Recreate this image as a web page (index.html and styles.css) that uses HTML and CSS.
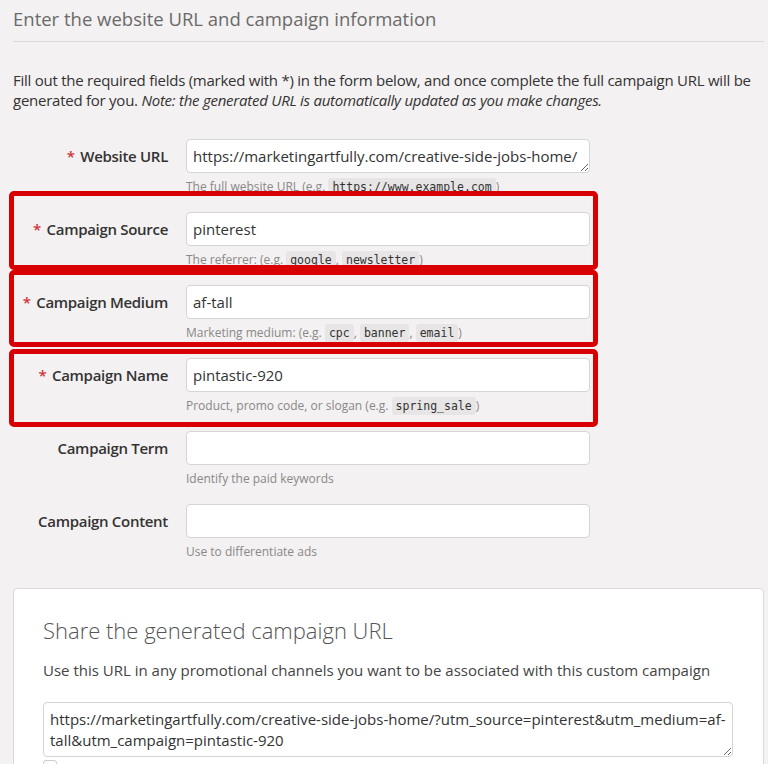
FILE: index.html
```html
<!DOCTYPE html>
<html lang="en">
<head>
<meta charset="utf-8">
<title>Campaign URL Builder</title>
<link rel="stylesheet" href="styles.css">
</head>
<body>
<div class="page">
  <h2 class="section-title">Enter the website URL and campaign information</h2>
  <p class="intro">Fill out the required fields (marked with *) in the form below, and once complete the full campaign URL will be generated for you. <em>Note: the generated URL is automatically updated as you make changes.</em></p>

  <div class="form">
    <div class="row">
      <label class="label"><span class="req">*</span> Website URL</label>
      <div class="field">
        <textarea class="input area" rows="1">https://marketingartfully.com/creative-side-jobs-home/</textarea>
        <div class="help">The full website URL (e.g. <code>https://www.example.com</code>)</div>
      </div>
    </div>
    <div class="row hl hl-1">
      <label class="label"><span class="req">*</span> Campaign Source</label>
      <div class="field">
        <input class="input" type="text" value="pinterest">
        <div class="help">The referrer: (e.g. <code>google</code>, <code>newsletter</code>)</div>
      </div>
    </div>
    <div class="row hl hl-2">
      <label class="label"><span class="req">*</span> Campaign Medium</label>
      <div class="field">
        <input class="input" type="text" value="af-tall">
        <div class="help">Marketing medium: (e.g. <code>cpc</code>, <code>banner</code>, <code>email</code>)</div>
      </div>
    </div>
    <div class="row hl hl-3">
      <label class="label"><span class="req">*</span> Campaign Name</label>
      <div class="field">
        <input class="input" type="text" value="pintastic-920">
        <div class="help">Product, promo code, or slogan (e.g. <code>spring_sale</code>)</div>
      </div>
    </div>
    <div class="row">
      <label class="label">Campaign Term</label>
      <div class="field">
        <input class="input" type="text" value="">
        <div class="help">Identify the paid keywords</div>
      </div>
    </div>
    <div class="row">
      <label class="label">Campaign Content</label>
      <div class="field">
        <input class="input" type="text" value="">
        <div class="help">Use to differentiate ads</div>
      </div>
    </div>
  </div>

  <div class="card">
    <h3 class="card-title">Share the generated campaign URL</h3>
    <p class="card-text">Use this URL in any promotional channels you want to be associated with this custom campaign</p>
    <textarea class="output">https://marketingartfully.com/creative-side-jobs-home/?utm_source=pinterest&amp;utm_medium=af-tall&amp;utm_campaign=pintastic-920</textarea>
    <div class="check"></div>
  </div>
</div>
</body>
</html>
```

FILE: styles.css
```css
html, body {
  margin: 0;
  padding: 0;
  background: #f3f1f1;
  overflow: hidden;
}
body {
  font-family: "Open Sans", "Liberation Sans", sans-serif;
  color: #333;
  height: 764px;
}
.page {
  padding: 0 4px 0 13px;
}
.section-title {
  margin: 0;
  padding: 7px 0 10px;
  font-size: 18.5px;
  line-height: 24px;
  font-weight: 400;
  color: #6a6a6a;
  border-bottom: 1px solid #dcdada;
}
.intro {
  margin: 28px 0 0;
  font-size: 15px;
  line-height: 20px;
  color: #333;
  letter-spacing: -0.25px;
}
.intro em {
  font-style: italic;
}
.form {
  margin-top: 29px;
  display: flow-root;
}
.row {
  display: grid;
  grid-template-columns: 155px 404px;
  column-gap: 18px;
  width: 577px;
  margin-bottom: 16px;
  position: relative;
}
.label {
  text-align: right;
  font-size: 15px;
  font-weight: 600;
  color: #333;
  line-height: 34px;
  letter-spacing: -0.3px;
  white-space: nowrap;
}
.req {
  color: #d0343a;
  margin-right: 2px;
}
.input {
  display: block;
  box-sizing: border-box;
  width: 404px;
  height: 34px;
  margin: 0;
  padding: 0 6px;
  border: 1px solid #d6d4d4;
  border-radius: 4px;
  background: #fff;
  font-family: "Open Sans", "Liberation Sans", sans-serif;
  font-size: 15px;
  color: #333;
  outline: none;
}
.area {
  padding: 5px 6px;
  line-height: 22px;
  resize: vertical;
  overflow: hidden;
}
.help {
  margin-top: 5px;
  height: 18px;
  font-size: 12px;
  line-height: 18px;
  color: #8a8888;
  white-space: nowrap;
}
.help code {
  font-family: "DejaVu Sans Mono", "Liberation Mono", monospace;
  font-size: 11.5px;
  line-height: 14px;
  color: #333;
  background: #e7e5e5;
  border-radius: 3px;
  padding: 2px 4px;
}
.hl::before {
  content: "";
  position: absolute;
  left: -4px;
  right: -8px;
  border: 5px solid #d80000;
  border-radius: 5px;
  pointer-events: none;
}
.hl-1::before { top: -21px; bottom: -1px; }
.hl-2::before { top: -15px; bottom: -5px; }
.hl-3::before { top: -9px; bottom: -12px; }

.card {
  margin-top: 11px;
  background: #fff;
  border: 1px solid #dcdada;
  border-radius: 4px;
  padding: 26px 29px 20px;
  height: 200px;
}
.card-title {
  margin: 0;
  font-size: 22px;
  line-height: 30px;
  font-weight: 300;
  color: #555;
}
.card-text {
  margin: 15px 0 0;
  font-size: 15px;
  line-height: 20px;
  color: #444;
}
.output {
  display: block;
  box-sizing: border-box;
  margin-top: 22px;
  width: 690px;
  height: 55px;
  padding: 6px 6px;
  border: 1px solid #d6d4d4;
  border-radius: 4px;
  font-family: "Open Sans", "Liberation Sans", sans-serif;
  font-size: 15px;
  line-height: 21px;
  color: #333;
  resize: vertical;
  overflow: hidden;
  outline: none;
}
.check {
  width: 12px;
  height: 12px;
  margin-top: 3px;
  border: 1px solid #ccc;
  border-radius: 3px;
}
```
